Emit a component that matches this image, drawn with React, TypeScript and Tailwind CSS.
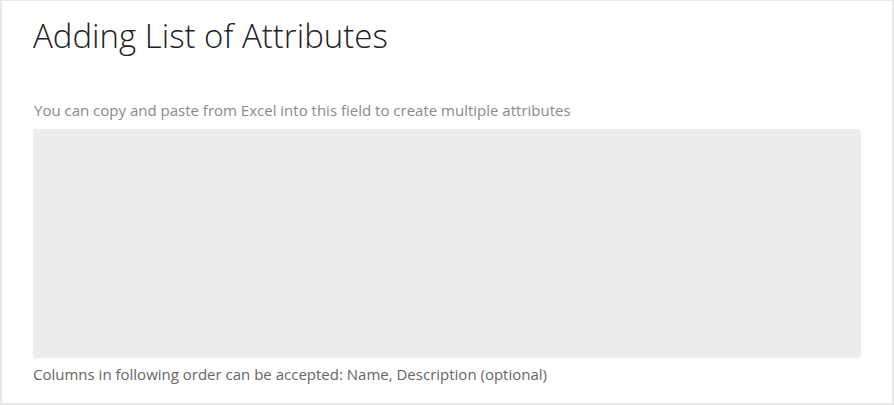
export default function App() {
  return (
    <div className="h-[405px] w-[894px] bg-white font-['Open_Sans',sans-serif]">
      <div className="flex h-full flex-col border-x-2 border-t border-b-2 border-[#e8e8e8] pl-[31px] pr-[31px]">
        <h1 className="mt-[14px] text-[33px] font-light leading-[42px] text-[#222]">Adding List of Attributes</h1>
        <p className="mt-[42px] pl-px text-[15px] leading-[22px] text-[#8a8a8a]">
          You can copy and paste from Excel into this field to create multiple attributes
        </p>
        <textarea className="mt-[8px] h-[229px] w-full resize-none rounded-[3px] bg-[#ededed] outline-none" />
        <p className="mt-[5px] text-[15px] leading-[22px] text-[#666]">
          Columns in following order can be accepted: Name, Description (optional)
        </p>
      </div>
    </div>
  );
}
